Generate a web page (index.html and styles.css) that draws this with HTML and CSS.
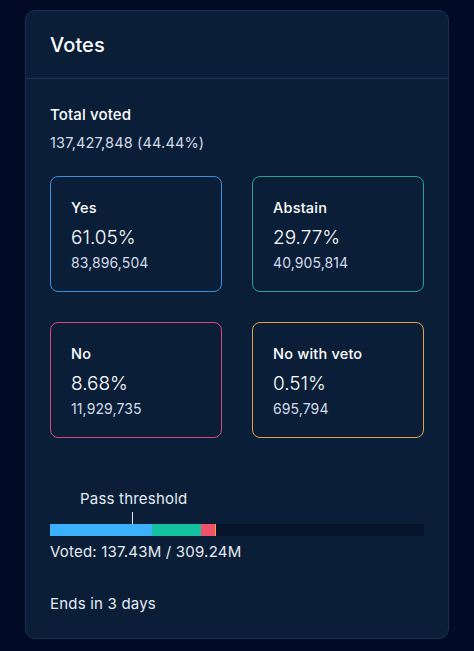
FILE: index.html
```html
<!DOCTYPE html>
<html lang="en">
<head>
<meta charset="utf-8">
<title>Votes</title>
<link rel="stylesheet" href="styles.css">
</head>
<body>
<section class="card">
  <header class="card-header">
    <h2 class="title">Votes</h2>
  </header>
  <div class="card-body">
    <div class="total">
      <div class="total-label">Total voted</div>
      <div class="total-value">137,427,848 (44.44%)</div>
    </div>
    <div class="options">
      <div class="option option-yes">
        <div class="opt-label">Yes</div>
        <div class="opt-pct">61.05%</div>
        <div class="opt-count">83,896,504</div>
      </div>
      <div class="option option-abstain">
        <div class="opt-label">Abstain</div>
        <div class="opt-pct">29.77%</div>
        <div class="opt-count">40,905,814</div>
      </div>
      <div class="option option-no">
        <div class="opt-label">No</div>
        <div class="opt-pct">8.68%</div>
        <div class="opt-count">11,929,735</div>
      </div>
      <div class="option option-veto">
        <div class="opt-label">No with veto</div>
        <div class="opt-pct">0.51%</div>
        <div class="opt-count">695,794</div>
      </div>
    </div>
    <div class="progress">
      <div class="threshold">
        <span class="threshold-label">Pass threshold</span>
        <span class="threshold-tick"></span>
      </div>
      <div class="bar">
        <span class="seg seg-yes" style="width: 27.2%"></span>
        <span class="seg seg-abstain" style="width: 13.1%"></span>
        <span class="seg seg-no" style="width: 3.8%"></span>
        <span class="seg seg-veto" style="width: 0.3%"></span>
      </div>
      <div class="voted">Voted: 137.43M / 309.24M</div>
    </div>
    <div class="ends">Ends in 3 days</div>
  </div>
</section>
</body>
</html>
```
FILE: styles.css
```css
* { box-sizing: border-box; }
html, body { margin: 0; padding: 0; }
body {
  background: #020b25;
  font-family: "Inter", "Lato", "Liberation Sans", sans-serif;
  color: #ffffff;
  padding: 10px 25px 12px 25px;
}
.card {
  background: #0a1e38;
  border: 1px solid #1b3050;
  border-radius: 10px;
  width: 424px;
  height: 629px;
}
.card-header {
  height: 68px;
  border-bottom: 1px solid #1f3554;
  display: flex;
  align-items: center;
  padding: 0 24px;
}
.title {
  margin: 0;
  font-size: 20px;
  font-weight: 500;
  letter-spacing: 0.1px;
}
.card-body {
  padding: 26px 24px 0 24px;
}
.total-label {
  font-size: 15px;
  font-weight: 500;
  line-height: 20px;
  letter-spacing: 0.15px;
}
.total-value {
  font-size: 14.5px;
  line-height: 20px;
  margin-top: 8px;
  color: #d4dcea;
  letter-spacing: 0.15px;
}
.options {
  margin-top: 23px;
  display: grid;
  grid-template-columns: 172px 172px;
  column-gap: 30px;
  row-gap: 30px;
}
.option {
  height: 116px;
  border: 1.5px solid;
  border-radius: 8px;
  padding: 22px 20px 0 20px;
}
.option-yes { border-color: #3f8de0; }
.option-abstain { border-color: #25a68e; }
.option-no { border-color: #d9497a; }
.option-veto { border-color: #dea444; }
.opt-label {
  font-size: 14.5px;
  font-weight: 500;
  line-height: 18px;
  letter-spacing: 0.2px;
}
.opt-pct {
  font-size: 19px;
  line-height: 24px;
  margin-top: 9px;
  font-weight: 300;
}
.opt-count {
  font-size: 14px;
  line-height: 20px;
  margin-top: 3px;
  color: #d4dcea;
  letter-spacing: 0.1px;
}
.progress {
  margin-top: 50px;
}
.threshold {
  position: relative;
  height: 36px;
}
.threshold-label {
  position: absolute;
  left: 30px;
  top: 1px;
  font-size: 15px;
  line-height: 20px;
  color: #e6ebf3;
  letter-spacing: 0.2px;
}
.threshold-tick {
  position: absolute;
  left: 82px;
  top: 24px;
  width: 1px;
  height: 12px;
  background: #e6ebf3;
}
.bar {
  height: 12px;
  background: #06152b;
  display: flex;
}
.seg { height: 100%; display: block; }
.seg-yes { background: #3cb0fb; }
.seg-abstain { background: #13c19f; }
.seg-no { background: #f0516b; }
.seg-veto { background: #f5a33b; }
.voted {
  margin-top: 6px;
  font-size: 15px;
  line-height: 20px;
  color: #e6ebf3;
  letter-spacing: 0.2px;
}
.ends {
  margin-top: 32px;
  font-size: 15px;
  line-height: 20px;
  color: #e6ebf3;
  letter-spacing: 0.2px;
}
```
